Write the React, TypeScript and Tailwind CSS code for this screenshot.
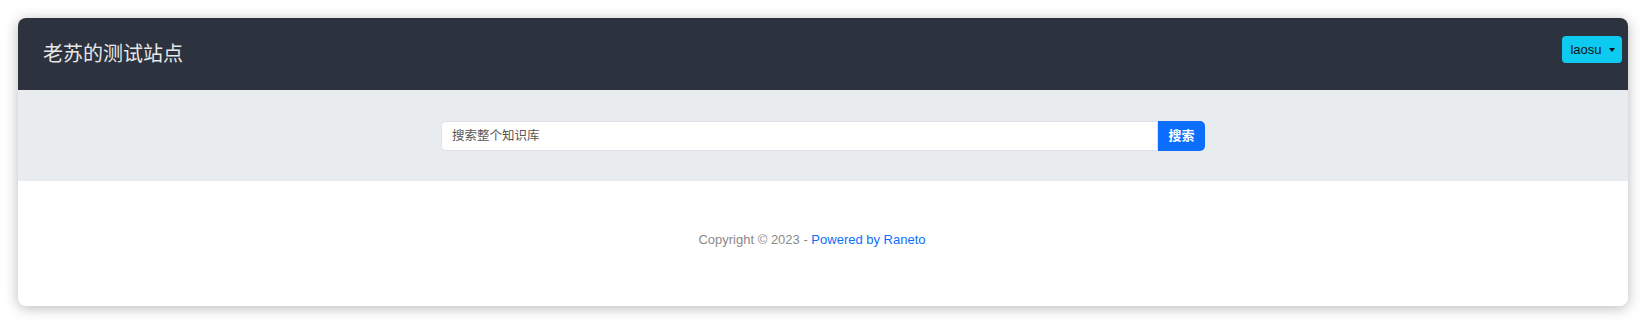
import React from 'react';

// Simple knowledge base landing page inside a window frame
export default function App() {
  return (
    <div className="w-[1646px] h-[324px] bg-white p-[18px]" style={{ fontFamily: '"Liberation Sans", "Noto Sans CJK SC", sans-serif' }}>
      <div className="h-[288px] rounded-[8px] overflow-hidden bg-white shadow-[0_2px_14px_rgba(0,0,0,0.28)] flex flex-col">
        {/* Navbar */}
        <header className="h-[72px] bg-[#2c323e] flex items-center justify-between pl-[25px] pr-[6px]">
          <h1 className="text-[20px] text-[#e8e8e8] leading-none">老苏的测试站点</h1>
          <button className="h-[27px] w-[60px] -mt-[9px] rounded-[4px] bg-[#0dcaf0] text-[#111] text-[13px] flex items-center justify-center gap-[7px] pl-[1px]">
            laosu
            <span className="w-0 h-0 border-l-[3.5px] border-r-[3.5px] border-t-[4px] border-l-transparent border-r-transparent border-t-[#111]" />
          </button>
        </header>

        {/* Search band */}
        <div className="h-[91px] bg-[#e9ecef] flex items-center justify-center">
          <div className="flex w-[764px] h-[30px]">
            <input
              type="text"
              placeholder="搜索整个知识库"
              className="flex-1 h-full bg-white border border-[#dee2e6] rounded-l-[5px] px-[10px] text-[12.5px] text-[#333] placeholder:text-[#555] outline-none"
            />
            <button className="w-[47px] h-full bg-[#0d6efd] text-white text-[13px] font-bold rounded-r-[5px]">
              搜索
            </button>
          </div>
        </div>

        {/* Footer */}
        <footer className="flex-1 flex items-center justify-center pr-[22px] pb-[7px]">
          <p className="text-[13px] text-[#8a8a8a]">
            Copyright © 2023 - <a href="#" className="text-[#0d6efd]">Powered by Raneto</a>
          </p>
        </footer>
      </div>
    </div>
  );
}
